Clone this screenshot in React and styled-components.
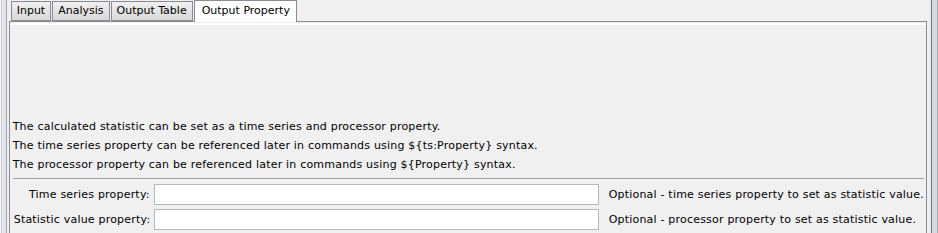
import React from "react";
import styled, { createGlobalStyle } from "styled-components";

const Global = createGlobalStyle`
  html, body { margin: 0; padding: 0; background: #f0f0f0; }
  body { width: 938px; height: 233px; overflow: hidden; }
  * { box-sizing: border-box; }
`;

const Window = styled.div`
  display: flex;
  height: 233px;
  font-family: "DejaVu Sans", Tahoma, sans-serif;
  font-size: 11px;
  letter-spacing: 0.2px;
  color: #000;
  background: #f0f0f0;
`;

const LeftEdge = styled.div`
  width: 8px;
  margin-right: 2px;
  background: #e2e6eb;
  border-left: 1px solid #f4f5f7;
  border-right: 1px solid #a3a7ad;
  box-shadow: inset 1px 0 0 #c9ced4;
`;

const RightEdge = styled.div`
  width: 9px;
  margin-left: 4px;
  display: flex;
`;

const EdgeBar = styled.div`
  width: 7px;
  background: #d6dbe1;
  border-left: 1px solid #6f7378;
  border-right: 1px solid #a6aab0;
`;

const Main = styled.div`
  flex: 0 0 915px;
  display: flex;
  flex-direction: column;
`;

const TabRow = styled.div`
  display: flex;
  align-items: flex-end;
  height: 22px;
  padding-left: 2px;
  gap: 1px;
  margin-bottom: -1px;
  position: relative;
  z-index: 1;
`;

const Tab = styled.div`
  height: ${(p) => (p.$active ? "22px" : "20px")};
  padding: ${(p) => (p.$active ? "0 6px 3px 7px" : "0 5px 1px")};
  display: flex;
  align-items: center;
  letter-spacing: 0;
  border: 1px solid #898c95;
  border-bottom: ${(p) => (p.$active ? "none" : "1px solid #898c95")};
  background: ${(p) =>
    p.$active ? "#ffffff" : "linear-gradient(#f0f0f0, #e5e5e5 45%, #d9d9d9)"};
  white-space: nowrap;
  margin-bottom: ${(p) => (p.$active ? "0" : "1px")};
`;

const Panel = styled.div`
  flex: 1;
  border: 1px solid #898c95;
  border-bottom: none;
  background: #f0f0f0;
`;

const PanelInner = styled.div`
  margin-top: 1px;
  border-top: 2px solid #ffffff;
  padding: 92px 2px 0 3px;
  display: flex;
  flex-direction: column;
`;

const Note = styled.div`
  line-height: 19px;
  height: 19px;
  white-space: nowrap;
`;

const Separator = styled.div`
  height: 1px;
  background: #a0a0a0;
  margin: 4px 0 5px;
`;

const Form = styled.div`
  display: grid;
  grid-template-columns: 136px 445px auto;
  column-gap: 4px;
  row-gap: 4px;
  align-items: center;
  padding-left: 1px;
`;

const Label = styled.label`
  text-align: right;
  white-space: nowrap;
`;

const Field = styled.input`
  height: 21px;
  width: 445px;
  border: 1px solid #b5b8bd;
  background: #fff;
  font: inherit;
  padding: 0 3px;
  outline: none;
`;

const Hint = styled.div`
  padding-left: 6px;
  white-space: nowrap;
`;

export default function App() {
  return (
    <>
      <Global />
      <Window>
        <LeftEdge />
        <Main>
          <TabRow>
            <Tab>Input</Tab>
            <Tab>Analysis</Tab>
            <Tab>Output Table</Tab>
            <Tab $active>Output Property</Tab>
          </TabRow>
          <Panel>
            <PanelInner>
              <Note>The calculated statistic can be set as a time series and processor property.</Note>
              <Note>The time series property can be referenced later in commands using ${"{ts:Property}"} syntax.</Note>
              <Note>The processor property can be referenced later in commands using ${"{Property}"} syntax.</Note>
              <Separator />
              <Form>
                <Label>Time series property:</Label>
                <Field />
                <Hint>Optional - time series property to set as statistic value.</Hint>
                <Label>Statistic value property:</Label>
                <Field />
                <Hint>Optional - processor property to set as statistic value.</Hint>
              </Form>
            </PanelInner>
          </Panel>
        </Main>
        <RightEdge>
          <EdgeBar />
        </RightEdge>
      </Window>
    </>
  );
}
